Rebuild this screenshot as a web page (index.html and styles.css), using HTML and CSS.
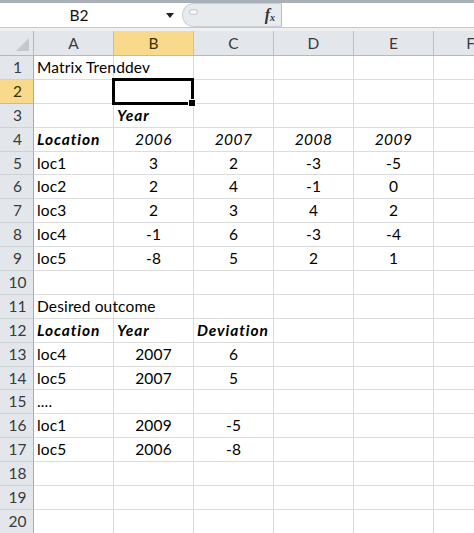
FILE: index.html
```html
<!DOCTYPE html>
<html>
<head>
<meta charset="utf-8">
<link rel="stylesheet" href="styles.css">
</head>
<body>
<div class="app">
  <div class="topbar"></div>
  <div class="formula">
    <div class="namebox">B2</div>
    <div class="drop"><svg width="8" height="5" viewBox="0 0 8 5"><path d="M0 0H8L4 5Z" fill="#222"/></svg></div>
    <div class="fxwrap">
      <span class="knob"></span>
      <span class="fx">f<sub>x</sub></span>
    </div>
    <div class="input"></div>
  </div>
  <div class="sep"></div>
  <div class="sheet">
    <div class="corner"><span class="tri"></span></div>
    <div class="ch">A</div><div class="ch sel">B</div><div class="ch">C</div><div class="ch">D</div><div class="ch">E</div><div class="ch last">F</div>

    <div class="rh">1</div><div class="c">Matrix Trenddev</div><div class="c"></div><div class="c"></div><div class="c"></div><div class="c"></div><div class="c"></div>
    <div class="rh sel">2</div><div class="c"></div><div class="c active"><span class="handle"></span></div><div class="c"></div><div class="c"></div><div class="c"></div><div class="c"></div>
    <div class="rh">3</div><div class="c"></div><div class="c bi">Year</div><div class="c"></div><div class="c"></div><div class="c"></div><div class="c"></div>
    <div class="rh">4</div><div class="c bi">Location</div><div class="c it ctr">2006</div><div class="c it ctr">2007</div><div class="c it ctr">2008</div><div class="c it ctr">2009</div><div class="c"></div>
    <div class="rh">5</div><div class="c">loc1</div><div class="c ctr">3</div><div class="c ctr">2</div><div class="c ctr">-3</div><div class="c ctr">-5</div><div class="c"></div>
    <div class="rh">6</div><div class="c">loc2</div><div class="c ctr">2</div><div class="c ctr">4</div><div class="c ctr">-1</div><div class="c ctr">0</div><div class="c"></div>
    <div class="rh">7</div><div class="c">loc3</div><div class="c ctr">2</div><div class="c ctr">3</div><div class="c ctr">4</div><div class="c ctr">2</div><div class="c"></div>
    <div class="rh">8</div><div class="c">loc4</div><div class="c ctr">-1</div><div class="c ctr">6</div><div class="c ctr">-3</div><div class="c ctr">-4</div><div class="c"></div>
    <div class="rh">9</div><div class="c">loc5</div><div class="c ctr">-8</div><div class="c ctr">5</div><div class="c ctr">2</div><div class="c ctr">1</div><div class="c"></div>
    <div class="rh">10</div><div class="c"></div><div class="c"></div><div class="c"></div><div class="c"></div><div class="c"></div><div class="c"></div>
    <div class="rh">11</div><div class="c">Desired outcome</div><div class="c"></div><div class="c"></div><div class="c"></div><div class="c"></div><div class="c"></div>
    <div class="rh">12</div><div class="c bi">Location</div><div class="c bi">Year</div><div class="c bi">Deviation</div><div class="c"></div><div class="c"></div><div class="c"></div>
    <div class="rh">13</div><div class="c">loc4</div><div class="c ctr">2007</div><div class="c ctr">6</div><div class="c"></div><div class="c"></div><div class="c"></div>
    <div class="rh">14</div><div class="c">loc5</div><div class="c ctr">2007</div><div class="c ctr">5</div><div class="c"></div><div class="c"></div><div class="c"></div>
    <div class="rh">15</div><div class="c">....</div><div class="c"></div><div class="c"></div><div class="c"></div><div class="c"></div><div class="c"></div>
    <div class="rh">16</div><div class="c">loc1</div><div class="c ctr">2009</div><div class="c ctr">-5</div><div class="c"></div><div class="c"></div><div class="c"></div>
    <div class="rh">17</div><div class="c">loc5</div><div class="c ctr">2006</div><div class="c ctr">-8</div><div class="c"></div><div class="c"></div><div class="c"></div>
    <div class="rh">18</div><div class="c"></div><div class="c"></div><div class="c"></div><div class="c"></div><div class="c"></div><div class="c"></div>
    <div class="rh">19</div><div class="c"></div><div class="c"></div><div class="c"></div><div class="c"></div><div class="c"></div><div class="c"></div>
    <div class="rh">20</div><div class="c"></div><div class="c"></div><div class="c"></div><div class="c"></div><div class="c"></div><div class="c"></div>
  </div>
</div>
</body>
</html>
```
FILE: styles.css
```css
html, body {
  margin: 0;
  padding: 0;
  background: #ffffff;
}
.app {
  width: 474px;
  height: 533px;
  overflow: hidden;
  font-family: Lato, "Liberation Sans", sans-serif;
  color: #000;
}
.topbar {
  height: 3px;
  background: #a9afb6;
}
.formula {
  display: flex;
  height: 24px;
  background: #fff;
}
.namebox {
  width: 158px;
  font-size: 15.5px;
  line-height: 24px;
  text-align: center;
  color: #111;
}
.drop {
  width: 24px;
  display: flex;
  align-items: center;
  justify-content: center;
}
.fxwrap {
  width: 100px;
  box-sizing: border-box;
  background: #e8ebee;
  border: 1px solid #c9ced4;
  border-right: 1px solid #b9bec5;
  border-radius: 12px 0 0 12px;
  display: flex;
  align-items: center;
  justify-content: space-between;
  padding: 0 6px 0 6px;
}
.knob {
  width: 7px;
  height: 4px;
  border-radius: 50%;
  border: 1px solid #c3c8ce;
  background: #f4f6f8;
  margin-top: -6px;
}
.fx {
  font-family: "Liberation Serif", serif;
  font-style: italic;
  font-size: 16px;
  font-weight: bold;
  color: #333;
}
.fx sub {
  font-size: 10px;
  vertical-align: 0;
  position: relative;
  top: 1px;
}
.input {
  flex: 1;
  background: #fff;
}
.sep {
  height: 4px;
  border-top: 1px solid #c4c9cf;
  background: #eef0f2;
  box-sizing: border-box;
}
.sheet {
  display: grid;
  grid-template-columns: 34px 80px 80px 80px 80px 80px 41px;
  grid-template-rows: 25px repeat(20, 23.9px);
}
.corner {
  background: #e3e7ec;
  border-right: 1px solid #b4b9c0;
  border-bottom: 1px solid #b4b9c0;
  box-sizing: border-box;
  position: relative;
}
.tri {
  position: absolute;
  right: 4px;
  bottom: 4px;
  width: 0;
  height: 0;
  border-left: 13px solid transparent;
  border-bottom: 13px solid #c4c9cf;
}
.ch {
  background: #e3e7ec;
  border-right: 1px solid #bcc1c7;
  border-bottom: 1px solid #b4b9c0;
  box-sizing: border-box;
  font-size: 15.5px;
  line-height: 24px;
  text-align: center;
  color: #3a3a3a;
}
.ch.last {
  text-align: right;
  border-right: none;
  padding-right: 0;
}
.ch.sel {
  background: #f9d98c;
  border-bottom: 1px solid #f0b63f;
  border-right: 1px solid #e2c27b;
  color: #3a3000;
}
.rh {
  background: #e3e7ec;
  border-right: 1px solid #a6abb2;
  border-bottom: 1px solid #cdd1d6;
  box-sizing: border-box;
  font-size: 15.5px;
  line-height: 23px;
  text-align: center;
  color: #3a3a3a;
  padding-left: 2px;
}
.rh.sel {
  background: #f9d98c;
  border-bottom: 1px solid #f0b63f;
  color: #3a3000;
}
.c {
  border-right: 1px solid #dadcde;
  border-bottom: 1px solid #dadcde;
  box-sizing: border-box;
  font-size: 15.5px;
  line-height: 23px;
  padding: 0 3px;
  white-space: nowrap;
  overflow: visible;
  position: relative;
  letter-spacing: 0.15px;
}
.bi {
  font-weight: bold;
  font-style: italic;
  letter-spacing: 0.9px;
}
.it {
  font-style: italic;
  letter-spacing: 0.4px;
}
.ctr {
  text-align: center;
}
.active {
  border: 3px solid #000;
  margin: -2px 0 -1px -2px;
  z-index: 2;
}
.handle {
  position: absolute;
  right: -5px;
  bottom: -5px;
  width: 6px;
  height: 6px;
  background: #000;
  border: 1px solid #fff;
}
```
